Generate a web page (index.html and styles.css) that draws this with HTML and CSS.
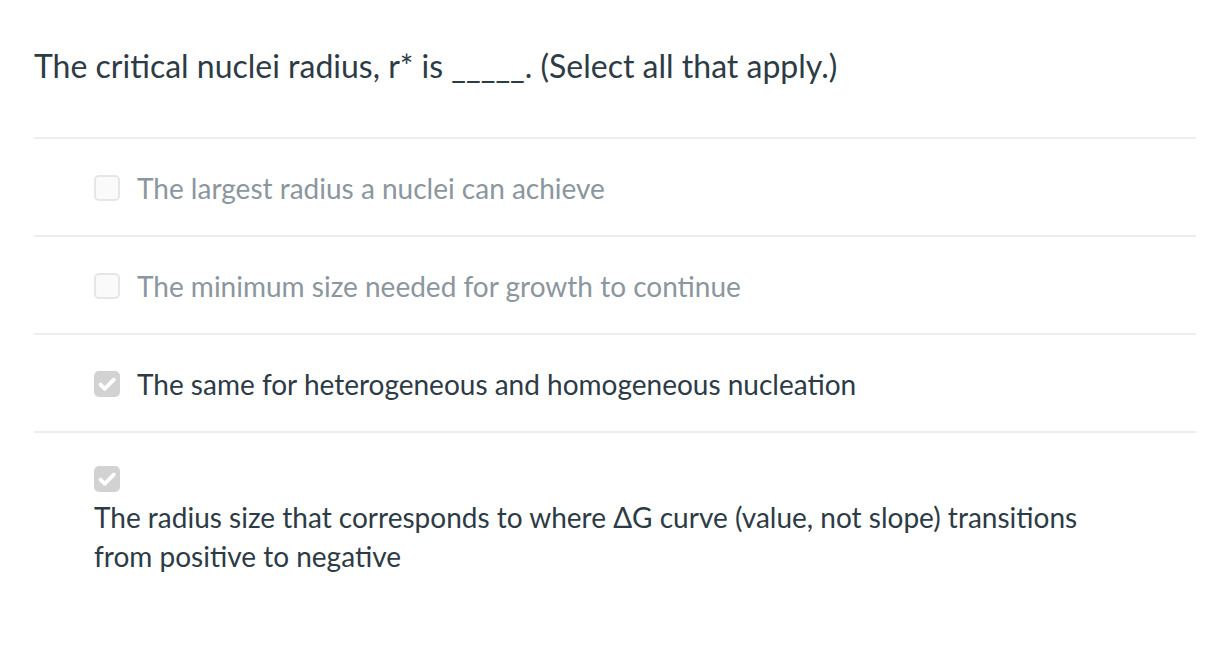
FILE: index.html
```html
<!DOCTYPE html>
<html>
<head>
<meta charset="utf-8">
<link rel="stylesheet" href="styles.css">
</head>
<body>
<div class="question">
  <div class="question-text">The critical nuclei radius, r* is _____. (Select all that apply.)</div>
  <div class="answers">
    <div class="answer">
      <span class="box"></span>
      <span class="label disabled">The largest radius a nuclei can achieve</span>
    </div>
    <div class="answer">
      <span class="box"></span>
      <span class="label disabled">The minimum size needed for growth to continue</span>
    </div>
    <div class="answer">
      <span class="box checked"><svg viewBox="0 0 24 24" width="22" height="22"><path d="M5 12.6l4.6 4.6L19.4 7.2" fill="none" stroke="#fff" stroke-width="4.2" stroke-linecap="round" stroke-linejoin="round"/></svg></span>
      <span class="label">The same for heterogeneous and homogeneous nucleation</span>
    </div>
    <div class="answer stacked">
      <span class="box checked"><svg viewBox="0 0 24 24" width="22" height="22"><path d="M5 12.6l4.6 4.6L19.4 7.2" fill="none" stroke="#fff" stroke-width="4.2" stroke-linecap="round" stroke-linejoin="round"/></svg></span>
      <span class="label">The radius size that corresponds to where ΔG curve (value, not slope) transitions from positive to negative</span>
    </div>
  </div>
</div>
</body>
</html>
```
FILE: styles.css
```css
html, body {
  margin: 0;
  padding: 0;
  background: #ffffff;
}
body {
  font-family: Lato, "Open Sans", sans-serif;
  color: #2d3b45;
}
.question {
  padding: 44px 34px 0 34px;
}
.question-text {
  font-size: 32px;
  line-height: 44px;
  padding-bottom: 49px;
}
.answers {
  display: flex;
  flex-direction: column;
}
.answer {
  display: flex;
  align-items: center;
  gap: 17px;
  border-top: 2px solid #eeeeee;
  padding: 30px 0 28px 60px;
  font-size: 28px;
  line-height: 38px;
}
.answer.stacked {
  flex-direction: column;
  align-items: flex-start;
  gap: 6px;
  padding-top: 33px;
  padding-right: 110px;
  line-height: 39px;
}
.box {
  flex: none;
  box-sizing: border-box;
  width: 26px;
  height: 26px;
  border: 2px solid #e6e6e6;
  border-radius: 5px;
  background: #fafafa;
  display: flex;
  align-items: center;
  justify-content: center;
}
.box.checked {
  background: #d2d2d2;
  border-color: #d2d2d2;
}
.label.disabled {
  color: #8b969e;
}
```
